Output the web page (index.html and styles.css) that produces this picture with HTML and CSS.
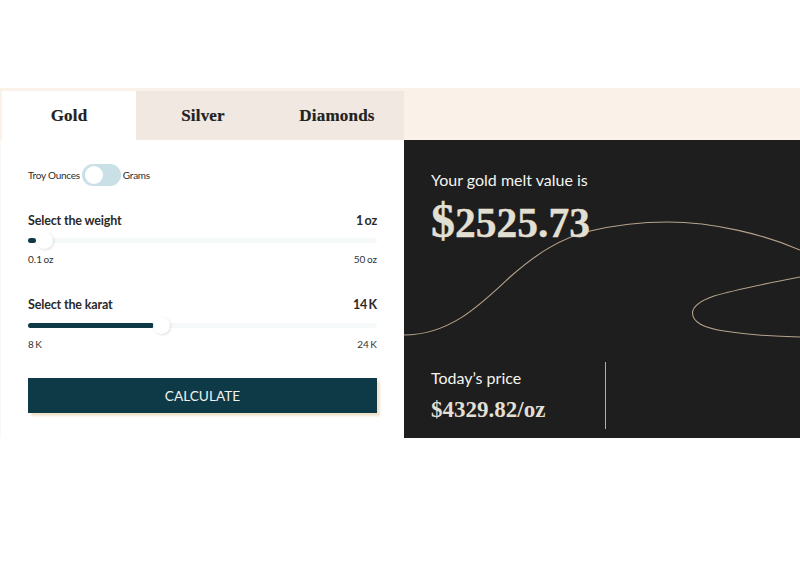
FILE: index.html
```html
<!DOCTYPE html>
<html lang="en">
<head>
<meta charset="utf-8">
<title>Melt value calculator</title>
<link rel="stylesheet" href="styles.css">
</head>
<body>
<main class="calc">
  <section class="left">
    <nav class="tabs">
      <div class="tab active">Gold</div>
      <div class="tab">Silver</div>
      <div class="tab">Diamonds</div>
    </nav>
    <form class="form">
      <div class="units">
        <span>Troy Ounces</span>
        <span class="switch"><span class="knob"></span></span>
        <span>Grams</span>
      </div>
      <div class="field weight">
        <div class="row head"><span>Select the weight</span><span class="val">1 oz</span></div>
        <div class="slider"><div class="fill fill-weight"></div><span class="thumb thumb-weight"></span></div>
        <div class="row range"><span>0.1 oz</span><span>50 oz</span></div>
      </div>
      <div class="field karat">
        <div class="row head"><span>Select the karat</span><span class="val">14 K</span></div>
        <div class="slider"><div class="fill fill-karat"></div><span class="thumb thumb-karat"></span></div>
        <div class="row range"><span>8 K</span><span>24 K</span></div>
      </div>
      <div class="button">CALCULATE</div>
    </form>
  </section>
  <section class="right">
    <div class="band"></div>
    <div class="panel">
      <svg class="curve" viewBox="0 0 396 299" width="396" height="299" aria-hidden="true">
        <path d="M0 195C46 195 76 165 106 137C131 115 156 98 186 91C216 84 241 82 263 82C311 82 361 95 396 110" />
        <path d="M396 137C360 144 330 150 310 156C296 161 288.500 166 288.500 173C288.500 182 300 188 320 191C345 195 370 196.500 396 197" />
      </svg>
      <div class="result">
        <p class="label">Your gold melt value is</p>
        <p class="value"><span class="dollar">$</span>2525.73</p>
      </div>
      <div class="today">
        <div class="price">
          <p class="label">Today’s price</p>
          <p class="per">$4329.82/oz</p>
        </div>
      </div>
    </div>
  </section>
</main>
</body>
</html>
```

FILE: styles.css
```css
* { box-sizing: border-box; }
html, body { margin: 0; padding: 0; background: #fff; }
body { padding-top: 88px; height: 582px; overflow: hidden; font-family: Lato, sans-serif; color: #222; }
p { margin: 0; }

.calc { display: grid; grid-template-columns: 404px 396px; height: 350px; }

.left { display: flex; flex-direction: column; background: #faf2e8; padding: 3px 0 0 2px; }
.tabs { display: grid; grid-template-columns: 134px 134px 134px; height: 49px; background: #f0e8e1; }
.tab { display: flex; align-items: center; justify-content: center; font-family: "Liberation Serif", serif; font-weight: 700; font-size: 17px; color: #222; letter-spacing: .2px; -webkit-text-stroke: .2px #222; }
.tab.active { background: #fff; }

.form { flex: 1; margin-left: -2px; background: #fff; border-left: 1px solid #fbf8f3; padding: 24px 27px 0 27px; display: flex; flex-direction: column; }

.units { display: flex; align-items: center; height: 22px; font-size: 10px; letter-spacing: -.25px; color: #2b2b2b; }
.switch { display: flex; align-items: center; width: 39px; height: 22px; margin: 0 2px; padding-left: 3px; border-radius: 11px; background: #c9e0e6; }
.knob { width: 18px; height: 18px; border-radius: 50%; background: #fff; }

.field { display: flex; flex-direction: column; }
.weight { margin-top: 27px; }
.karat { margin-top: 32px; }
.row { display: flex; justify-content: space-between; }
.head { font-size: 12.500px; font-weight: 700; line-height: 16px; letter-spacing: -.15px; color: #2a2a2a; }
.val { word-spacing: -1.500px; }
.range { font-size: 10px; line-height: 12px; color: #333; margin-top: 10px; word-spacing: -1px; }

.slider { position: relative; height: 5px; margin-top: 10px; border-radius: 3px; background: #f6f9f9; }
.weight .slider { margin-top: 9px; }
.fill { height: 5px; border-radius: 3px; background: #0e3a47; }
.fill-weight { width: 8px; }
.fill-karat { width: 126px; }
.thumb { position: absolute; top: -6px; width: 17px; height: 17px; border-radius: 50%; background: #fff; box-shadow: 1px 1px 3px rgba(0,0,0,.12); }
.thumb-weight { left: 8px; }
.thumb-karat { left: 125px; }

.button { display: flex; align-items: center; justify-content: center; height: 35px; margin-top: 28px; background: #0e3a47; color: #f2f2ee; font-size: 13.700px; box-shadow: 3px 3px 2px #efe3cc; }

.right { display: flex; flex-direction: column; }
.band { height: 52px; background: #faf2e8; }
.panel { position: relative; flex: 1; background: #1e1e1e; padding: 30px 0 0 27px; display: flex; flex-direction: column; }
.curve { position: absolute; left: 0; top: 0; fill: none; stroke: #b5a38c; stroke-width: 1.100; }
.result { position: relative; }
.label { font-size: 16px; line-height: 20px; color: #f4f4f0; }
.value { font-family: "Liberation Serif", serif; font-weight: 700; font-size: 41.500px; line-height: 50px; margin-top: 6px; color: #e2dfd3; -webkit-text-stroke: .4px #e2dfd3; }
.dollar { font-size: 48px; }
.today { position: relative; margin-top: auto; margin-bottom: 9px; height: 67px; }
.price { width: 175px; height: 67px; padding-top: 6px; border-right: 1px solid #b3aea2; }
.per { font-family: "Liberation Serif", serif; font-weight: 700; font-size: 23px; line-height: 26px; margin-top: 9px; color: #e2dfd3; }
```
